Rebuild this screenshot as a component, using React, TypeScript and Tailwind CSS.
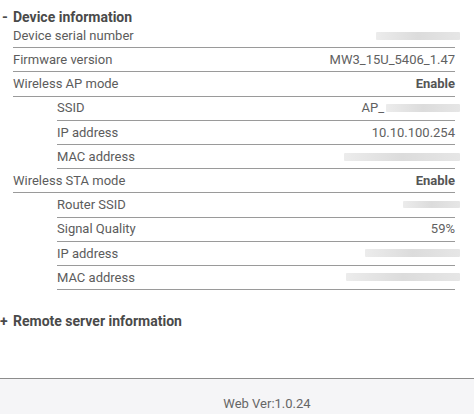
import React from 'react';

type Row = {
  label: string;
  value?: string;
  bold?: boolean;
  sub?: boolean;
  prefix?: string;
  blur?: number; // width of redacted bar
  blurH?: number;
};

const rows: Row[] = [
  { label: 'Device serial number', blur: 84 },
  { label: 'Firmware version', value: 'MW3_15U_5406_1.47' },
  { label: 'Wireless AP mode', value: 'Enable', bold: true },
  { label: 'SSID', sub: true, prefix: 'AP_', blur: 74 },
  { label: 'IP address', sub: true, value: '10.10.100.254' },
  { label: 'MAC address', sub: true, blur: 116 },
  { label: 'Wireless STA mode', value: 'Enable', bold: true },
  { label: 'Router SSID', sub: true, blur: 57, blurH: 7 },
  { label: 'Signal Quality', sub: true, value: '59%' },
  { label: 'IP address', sub: true, blur: 95 },
  { label: 'MAC address', sub: true, blur: 114 },
];

function Redacted({ width, height = 8 }: { width: number; height?: number }) {
  return (
    <span
      className="block -mr-[5px] rounded-[1px] bg-gradient-to-r from-[#ececec] via-[#dcdcdc] to-[#e6e6e6] blur-[0.6px]"
      style={{ width, height }}
    />
  );
}

function InfoRow({ row }: { row: Row }) {
  return (
    <div
      className={`h-[24.2px] flex items-center justify-between border-b border-[#9a9a9a] text-[13px] ${
        row.sub ? 'ml-[44px]' : ''
      }`}
    >
      <span className="text-[#5c5c5c]">{row.label}</span>
      <span className={`flex items-center ${row.bold ? 'font-bold text-[#555]' : 'text-[#616161]'}`}>
        {row.prefix && <span className="mr-[2px]">{row.prefix}</span>}
        {row.value}
        {row.blur && <Redacted width={row.blur} height={row.blurH} />}
      </span>
    </div>
  );
}

export default function App() {
  return (
    <div className="w-[474px] h-[414px] overflow-hidden flex flex-col bg-white font-['Roboto',sans-serif]">
      <div className="flex-1">
        <div className="h-[24px] pt-[10px] flex items-center text-[14px] font-bold text-[#4a4a4a]">
          <span className="w-[13px] pl-[2px] text-[15px]">-</span>
          Device information
        </div>
        <div className="pl-[13px] pr-[19px]">
          {rows.map((r, i) => (
            <InfoRow key={i} row={r} />
          ))}
        </div>
        <div className="mt-[22px] h-[18px] flex items-center text-[14px] font-bold text-[#4a4a4a]">
          <span className="w-[13px] text-[14px]">+</span>
          Remote server information
        </div>
      </div>
      <footer className="h-[36px] shrink-0 border-t border-[#8c8c8c] bg-[#f5f5f7] pt-[17px] pl-[60px] text-center text-[13px] leading-[16px] text-[#666]">
        Web Ver:1.0.24
      </footer>
    </div>
  );
}
